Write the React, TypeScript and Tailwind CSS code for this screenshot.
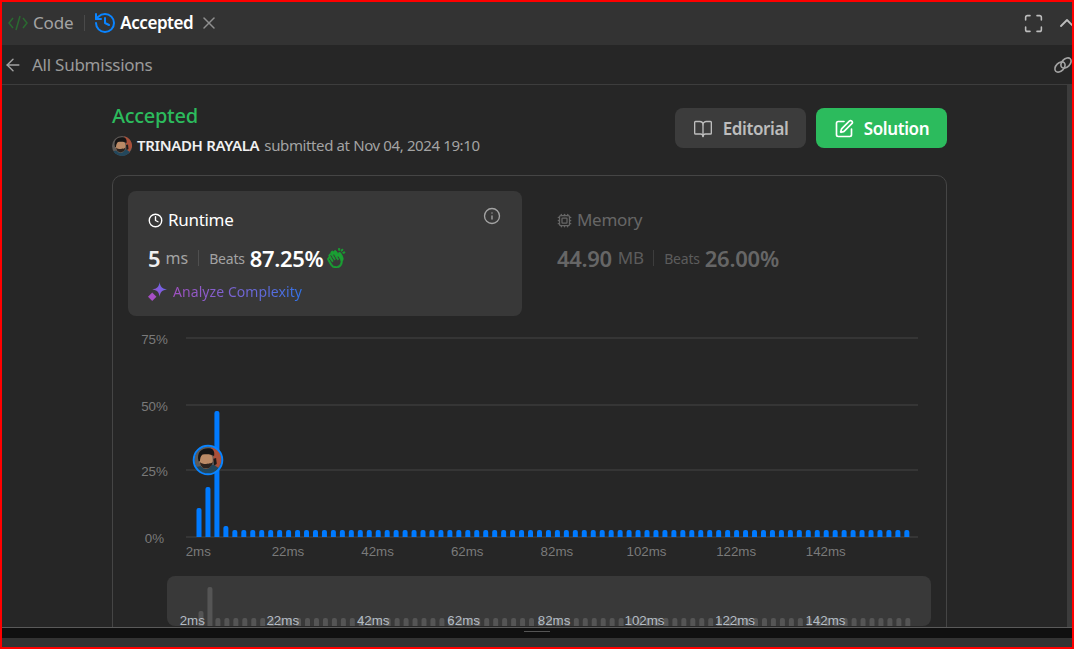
import { ArrowLeft, BookOpen, ChevronUp, Clock, Cpu, History, Info, Maximize, SquarePen, X } from "lucide-react"
import { PiHandsClappingFill } from "react-icons/pi"

const bars = Array.from({ length: 80 }, (_, i) => {
  const x = 199 + i * 8.96
  let top = 530
  if (i === 0) top = 508
  if (i === 1) top = 487
  if (i === 2) top = 411
  if (i === 3) top = 526
  return { x, top }
})

const gridLines = [
  { y: 338, label: "75%" },
  { y: 405, label: "50%" },
  { y: 470, label: "25%" },
  { y: 537, label: "0%" },
]

const ticks = ["2ms", "22ms", "42ms", "62ms", "82ms", "102ms", "122ms", "142ms"]

function barPath(x: number, top: number, bottom: number) {
  const w = 5
  const r = 2
  return `M${x - w / 2} ${bottom}V${top + r}Q${x - w / 2} ${top} ${x - w / 2 + r} ${top}H${x + w / 2 - r}Q${x + w / 2} ${top} ${x + w / 2} ${top + r}V${bottom}Z`
}

function Avatar({ cx, cy, r }: { cx: number; cy: number; r: number }) {
  const s = r / 10
  return (
    <g transform={`translate(${cx} ${cy}) scale(${s})`}>
      <circle r="10" fill="#5f5b58" />
      <path d="M2 -9.8 A10 10 0 0 1 10 1 L7 7 L4 1 L4 -5Z" fill="#a8503a" />
      <path d="M-8.5 5.2 A10 10 0 0 0 8 6 L4 3.5 L-4 4Z" fill="#23475c" />
      <ellipse cx="-1.5" cy="0" rx="5" ry="6.6" fill="#bb8a66" />
      <path d="M-7 1 C-9 -7 -3 -9.5 2 -8.5 C4.5 -8 5 -5 4.5 -3 C2 -4.5 -1 -4.5 -4 -4 C-5.5 -3 -5.8 -1 -6 1Z" fill="#171515" />
      <path d="M-6 1.5 C-5.5 8 2.5 8 3.5 1.5 C2 3 1 2.5 -1.5 3 C-3.5 3 -5 2.5 -6 1.5Z" fill="#2b221e" />
      <path d="M4 -1 L6 -1.5 L6.5 3 L4.5 4Z" fill="#1c1c1c" />
    </g>
  )
}

function Sparkle() {
  return (
    <svg width="19" height="19" viewBox="0 0 18 18" className="shrink-0">
      <defs>
        <linearGradient id="spark" x1="0" y1="1" x2="1" y2="0">
          <stop offset="0" stopColor="#a64fc4" />
          <stop offset="1" stopColor="#5a6cf5" />
        </linearGradient>
      </defs>
      <path d="M11 0 C11.5 4.5 13.5 6.5 18 7 C13.5 7.5 11.5 9.5 11 14 C10.5 9.5 8.5 7.5 4 7 C8.5 6.5 10.5 4.5 11 0Z" fill="url(#spark)" />
      <path d="M4 10 L8 14 L4 18 L0 14Z" fill="#a64fc4" />
    </svg>
  )
}

export default function App() {
  return (
    <div className="w-[1074px] h-[649px] overflow-hidden border-2 border-[#ff0000] bg-[#333333] flex flex-col font-['Noto_Sans',sans-serif]">
      <div className="h-[43px] shrink-0 bg-[#333333] flex items-center pl-[6px] pb-[1px]">
        <svg width="20" height="16" viewBox="0 0 20 16" fill="none" stroke="#2a6a30" strokeWidth="1.5" className="shrink-0">
          <path d="M5 3L1 8L5 13" />
          <path d="M12 1L8 15" />
          <path d="M15 3L19 8L15 13" />
        </svg>
        <span className="ml-[5px] text-[17px] text-[#a3a3a3] tracking-[-0.2px]">Code</span>
        <div className="ml-[11px] h-[16px] w-px bg-[#4a4a4a]" />
        <History className="ml-[8px] h-[24px] w-[24px] text-[#0a84ff]" strokeWidth={2} />
        <span className="ml-[3px] text-[17px] font-semibold text-white tracking-[-0.45px]">Accepted</span>
        <X className="ml-[6px] h-[20px] w-[20px] text-[#8f8f8f]" strokeWidth={1.8} />
        <Maximize className="ml-auto h-[21px] w-[21px] text-[#bdbdbd]" strokeWidth={1.8} />
        <ChevronUp className="ml-[11px] -mr-[7px] h-[24px] w-[24px] text-[#bdbdbd] shrink-0" strokeWidth={1.8} />
      </div>

      <div className="h-[40px] shrink-0 bg-[#262626] border-b border-[#3d3d3d] flex items-center pl-[1px] overflow-hidden">
        <ArrowLeft className="h-[20px] w-[20px] text-[#a3a3a3]" strokeWidth={1.7} />
        <span className="ml-[9px] text-[17px] text-[#9a9a9a] tracking-[-0.25px]">All Submissions</span>
        <svg className="ml-auto -mr-[1px] text-[#a3a3a3]" width="20" height="20" viewBox="0 0 20 20" fill="none" stroke="currentColor" strokeWidth="1.6">
          <ellipse cx="7" cy="12" rx="6" ry="4" transform="rotate(-45 7 12)" />
          <ellipse cx="13" cy="8" rx="6" ry="4" transform="rotate(-45 13 8)" />
        </svg>
      </div>

      <div className="flex-1 min-h-0 flex bg-[#262626] overflow-hidden">
        <div className="flex-1 min-w-0 pl-[110px] pt-[23px] overflow-hidden">
          <div className="w-[835px] h-[40px] flex justify-between">
            <div className="flex flex-col">
              <span className="text-[20px] leading-[18px] font-medium text-[#2cbb5d] mt-[-1px] tracking-[-0.3px]">Accepted</span>
              <div className="mt-[9px] flex items-center">
                <svg width="20" height="20" viewBox="-10 -10 20 20" className="shrink-0 mt-[1px]">
                  <Avatar cx={0} cy={0} r={10} />
                </svg>
                <span className="ml-[5px] text-[15px] font-semibold text-[#f0f0f0] tracking-[-0.35px]">TRINADH RAYALA</span>
                <span className="ml-[5px] text-[15px] text-[#a3a3a3] tracking-[-0.38px]">submitted at Nov 04, 2024 19:10</span>
              </div>
            </div>
            <div className="flex gap-[10px]">
              <button className="h-[40px] w-[131px] pt-[2px] rounded-lg bg-[#3c3c3c] flex items-center justify-center gap-[10px] text-[#bdbdbd] text-[17px] font-semibold tracking-[-0.4px]">
                <BookOpen className="h-[20px] w-[20px]" strokeWidth={1.6} />
                Editorial
              </button>
              <button className="h-[40px] w-[131px] pt-[2px] rounded-lg bg-[#2cbb5d] flex items-center justify-center gap-[10px] text-white text-[17px] font-semibold tracking-[-0.4px]">
                <SquarePen className="h-[20px] w-[20px]" strokeWidth={2} />
                Solution
              </button>
            </div>
          </div>

          <div className="relative mt-[27px] w-[835px] h-[470px] rounded-t-[10px] border border-[#454545] px-[15px] pt-[15px]">
            <div className="absolute left-[162px] top-[20px] h-[2px] w-[2px] bg-[#0c8a5a]" />
            <div className="flex">
              <div className="relative w-[394px] h-[125px] rounded-lg bg-[#383838] px-[20px] pt-[17px]">
                <div className="flex items-center gap-[5px] text-white">
                  <Clock className="h-[15px] w-[15px]" strokeWidth={2.2} />
                  <span className="text-[17px] leading-[24px] tracking-[-0.3px]">Runtime</span>
                </div>
                <Info className="absolute right-[21px] top-[16px] h-[18px] w-[18px] text-[#a3a3a3]" strokeWidth={1.8} />
                <div className="mt-[13px] flex items-center h-[26px]">
                  <span className="text-[22px] font-semibold text-[#f0f0f0]">5</span>
                  <span className="ml-[5px] text-[16px] text-[#a3a3a3]">ms</span>
                  <div className="ml-[10px] mr-[10px] h-[16px] w-px bg-[#4f4f4f]" />
                  <span className="text-[14px] text-[#a3a3a3] tracking-[-0.2px]">Beats</span>
                  <span className="ml-[5px] text-[22px] font-semibold text-white tracking-[-0.35px]">87.25%</span>
                  <PiHandsClappingFill className="ml-[3px] h-[20px] w-[20px] text-[#1aa033]" stroke="currentColor" strokeWidth={10} />
                </div>
                <div className="mt-[10px] flex items-center gap-[6px]">
                  <Sparkle />
                  <span className="text-[14px] tracking-[0.07px] text-transparent bg-clip-text bg-gradient-to-r from-[#a050c0] to-[#2f72e6]">Analyze Complexity</span>
                </div>
              </div>
              <div className="ml-[35px] pt-[17px] text-[#666666]">
                <div className="flex items-center gap-[5px]">
                  <Cpu className="h-[15px] w-[15px]" strokeWidth={2} />
                  <span className="text-[17px] leading-[24px] tracking-[-0.3px]">Memory</span>
                </div>
                <div className="mt-[13px] flex items-center h-[26px]">
                  <span className="text-[22px] font-semibold tracking-[-0.35px]">44.90</span>
                  <span className="ml-[6px] text-[17px] text-[#5c5c5c]">MB</span>
                  <div className="ml-[9px] mr-[10px] h-[16px] w-px bg-[#3d3d3d]" />
                  <span className="text-[14px] text-[#5c5c5c] tracking-[-0.2px]">Beats</span>
                  <span className="ml-[5px] text-[22px] font-semibold tracking-[-0.25px]">26.00%</span>
                </div>
              </div>
            </div>

            <svg className="block -mx-[15px]" width="833" height="260" viewBox="113 316 833 260">
              {gridLines.map((g) => (
                <g key={g.y}>
                  <line x1="186" x2="918" y1={g.y} y2={g.y} stroke="#444444" strokeWidth="1" />
                  <text x="154.5" y={g.y + 6} textAnchor="middle" fontFamily="Liberation Sans, sans-serif" fontSize="13.33" fill="#7a7a7a">{g.label}</text>
                </g>
              ))}
              {bars.map((b) => (
                <path key={b.x} d={barPath(b.x, b.top, 537)} fill="#007aff" />
              ))}
              {ticks.map((t, i) => (
                <text key={t} x={198.3 + i * 89.64} y="556" textAnchor="middle" fontFamily="Liberation Sans, sans-serif" fontSize="13.33" fill="#7a7a7a">{t}</text>
              ))}
              <Avatar cx={208} cy={460} r={13.5} />
              <circle cx="208" cy="460" r="14.3" fill="none" stroke="#0a84ff" strokeWidth="2" />
            </svg>

            <div className="ml-[39px] w-[764px] h-[50px] rounded-lg bg-[#393939]">
              <svg className="block overflow-visible" width="764" height="50" viewBox="167 576 764 50">
                {bars.map((b, i) => {
                  let top = 618
                  if (i === 0) top = 611
                  if (i === 1) top = 587
                  return <path key={b.x} d={barPath(b.x + (i < 2 ? 2 : 1), top, 626)} fill="#555555" />
                })}
                {ticks.map((t, i) => (
                  <text key={t} x={192.3 + i * 90.45} y="624.5" textAnchor="middle" fontFamily="Liberation Sans, sans-serif" fontSize="13.33" fill="#b4bcc4">{t}</text>
                ))}
              </svg>
            </div>
          </div>
        </div>
        <div className="w-[5px] shrink-0 bg-[#3c3c3c]" />
      </div>

      <div className="h-[11px] shrink-0 bg-[#101010] border-t border-[#5a5a5a] flex justify-center">
        <div className="mt-[3px] h-px w-[26px] bg-[#555555]" />
      </div>
      <div className="h-[9px] shrink-0 bg-[#333333]" />
    </div>
  )
}
